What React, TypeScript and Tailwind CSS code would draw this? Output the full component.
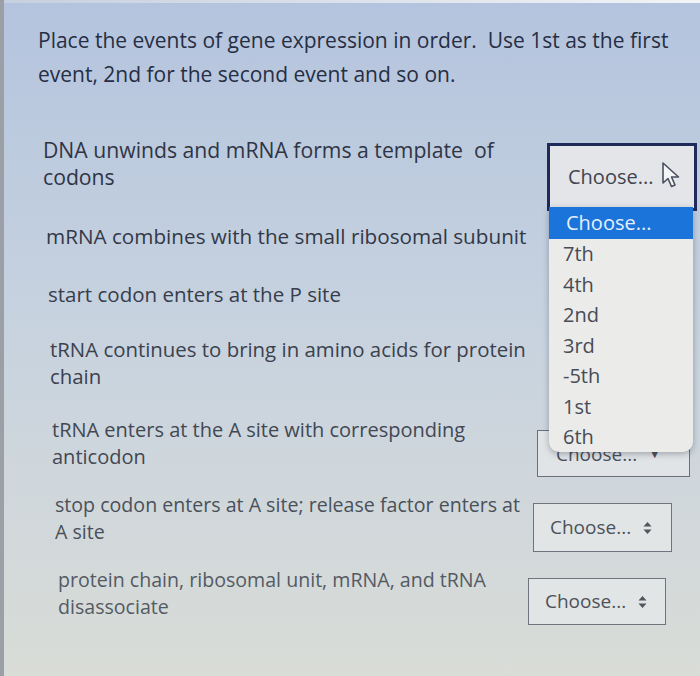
import React from 'react';

// Ordering question: each event gets a "Choose..." select on the right.
type Row = {
  lines: string[];
  box: string; // row height + left padding
  textW: string; // width of the text column, places the select
  size: string;
  color: string;
  select: 'focus' | 'plain' | 'hidden' | 'under';
  selBox: string;
};

const rows: Row[] = [
  {
    lines: ['DNA unwinds and mRNA forms a template  of', 'codons'],
    box: 'h-[87px] pl-[39px]',
    textW: 'w-[504px]',
    size: 'text-[21.2px]',
    color: 'text-[#2f3545]',
    select: 'focus',
    selBox: 'mt-[7px] h-[68px] w-[150px]',
  },
  {
    lines: ['mRNA combines with the small ribosomal subunit'],
    box: 'h-[58px] pl-[42px]',
    textW: 'w-[504px]',
    size: 'text-[20.7px]',
    color: 'text-[#323847]',
    select: 'hidden',
    selBox: 'mt-[4px] h-[46px] w-[140px]',
  },
  {
    lines: ['start codon enters at the P site'],
    box: 'h-[55px] pl-[44px]',
    textW: 'w-[502px]',
    size: 'text-[20.5px]',
    color: 'text-[#373d4a]',
    select: 'hidden',
    selBox: 'mt-[4px] h-[46px] w-[140px]',
  },
  {
    lines: ['tRNA continues to bring in amino acids for protein', 'chain'],
    box: 'h-[80px] pl-[46px]',
    textW: 'w-[500px]',
    size: 'text-[20.4px]',
    color: 'text-[#3b414d]',
    select: 'hidden',
    selBox: 'mt-[4px] h-[46px] w-[140px]',
  },
  {
    lines: ['tRNA enters at the A site with corresponding', 'anticodon'],
    box: 'h-[75px] pl-[48px]',
    textW: 'w-[485px]',
    size: 'text-[20px]',
    color: 'text-[#424853]',
    select: 'under',
    selBox: 'mt-[14px] h-[47px] w-[153px]',
  },
  {
    lines: ['stop codon enters at A site; release factor enters at', 'A site'],
    box: 'h-[75px] pl-[51px]',
    textW: 'w-[478px]',
    size: 'text-[19.6px]',
    color: 'text-[#4a505a]',
    select: 'plain',
    selBox: 'mt-[12px] h-[49px] w-[139px]',
  },
  {
    lines: ['protein chain, ribosomal unit, mRNA, and tRNA', 'disassociate'],
    box: 'h-[100px] pl-[54px]',
    textW: 'w-[470px]',
    size: 'text-[19.6px]',
    color: 'text-[#545a64]',
    select: 'plain',
    selBox: 'mt-[12px] h-[47px] w-[138px]',
  },
];

const options = ['7th', '4th', '2nd', '3rd', '-5th', '1st', '6th'];

function UpDown() {
  return (
    <svg width="9" height="14" viewBox="0 0 9 14" className="ml-3 shrink-0">
      <path d="M4.5 1 L8.5 5.5 H0.5 Z" fill="#4f545d" />
      <path d="M4.5 13 L8.5 8.5 H0.5 Z" fill="#4f545d" />
    </svg>
  );
}

function Pointer() {
  return (
    <svg width="22" height="28" viewBox="0 0 22 28" className="ml-2 -mt-1 shrink-0">
      <path
        d="M2 2 L2 22 L7 17.5 L10.5 25.5 L14 24 L10.5 16 L17.5 16 Z"
        fill="#f4f5f7"
        stroke="#4a5060"
        strokeWidth="1.6"
        strokeLinejoin="round"
      />
    </svg>
  );
}

function Select({ kind, box }: { kind: Row['select']; box: string }) {
  if (kind === 'focus') {
    return (
      <div
        className={`${box} shrink-0 flex items-center pl-[18px] border-[3px] border-[#1f2a58] bg-[#e3e5e9] text-[20px] text-[#3f4450]`}
      >
        Choose...
        <Pointer />
      </div>
    );
  }
  if (kind === 'under') {
    return (
      <div
        className={`${box} shrink-0 flex items-center pl-[18px] pt-[2px] border-[1.5px] border-[#6a6f78] bg-[#e1e4e6] text-[19px] text-[#4a4f5a]`}
      >
        Choose...
        <span className="ml-3 text-[11px]">▼</span>
      </div>
    );
  }
  if (kind === 'hidden') {
    return <div className={`${box} shrink-0`} />;
  }
  return (
    <div
      className={`${box} shrink-0 flex items-center pl-[16px] border-[1.5px] border-[#6f747c] bg-[#e2e5e5] text-[19px] text-[#4c515b]`}
    >
      Choose...
      <UpDown />
    </div>
  );
}

export default function App() {
  return (
    <div
      className="relative w-[700px] h-[676px] overflow-hidden border-l-[4px] border-[#9aa0a6] bg-linear-to-b from-[#b4c4de] via-[#c8d3df] to-[#d9dcd7]"
      style={{ fontFamily: '"Open Sans", "Noto Sans", sans-serif' }}
    >
      <div className="absolute inset-x-0 top-0 h-[3px] bg-linear-to-r from-[#c6d0df] to-[#f2f4f6]" />

      <div className="pt-[23px] pl-[34px] text-[21px] leading-[34px] text-[#262e44]">
        <p>Place the events of gene expression in order.&nbsp; Use 1st as the first</p>
        <p>event, 2nd for the second event and so on.</p>
      </div>

      <div className="mt-[45px]">
        {rows.map((row, i) => (
          <div key={i} className={`flex items-start ${row.box}`}>
            <div className={`${row.textW} shrink-0 leading-[27px] ${row.size} ${row.color}`}>
              {row.lines.map((l, j) => (
                <p key={j} className="whitespace-pre">
                  {l}
                </p>
              ))}
            </div>
            <Select kind={row.select} box={row.selBox} />
          </div>
        ))}
      </div>

      {/* open option list of the first select */}
      <div className="absolute left-[545px] top-[207px] w-[144px] h-[245px] bg-[#ebebe9] rounded-b-[10px] shadow-[0_2px_6px_rgba(40,50,70,0.35)] overflow-hidden text-[20px]">
        <div className="h-[32px] flex items-center pl-[17px] bg-[#1b74d9] text-[#e6efff]">Choose...</div>
        {options.map((o) => (
          <div key={o} className="h-[30.5px] flex items-center pl-[14px] text-[#474c57]">
            {o}
          </div>
        ))}
      </div>
    </div>
  );
}
